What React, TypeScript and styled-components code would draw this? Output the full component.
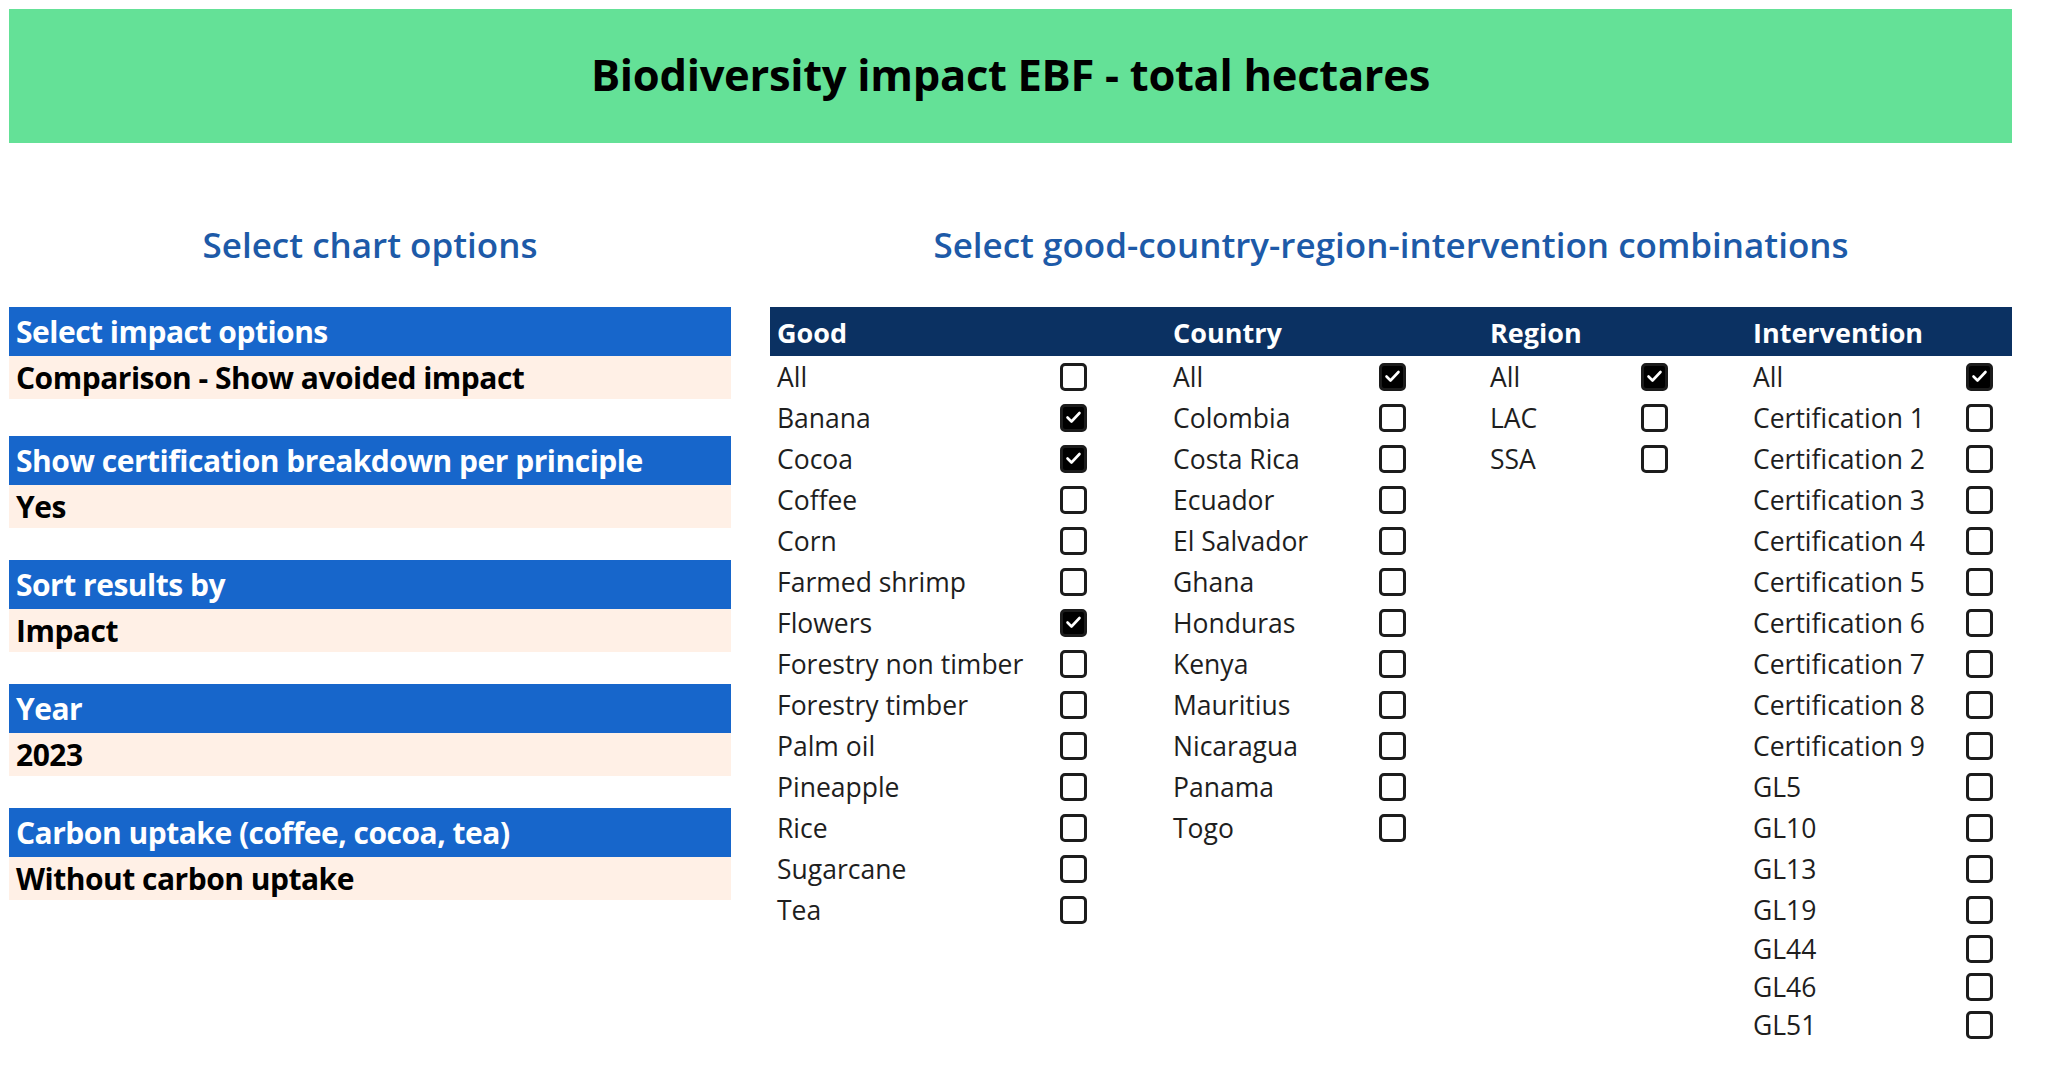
import styled, { createGlobalStyle } from 'styled-components'

const GlobalStyle = createGlobalStyle`
    body {
        margin: 0;
        background: #ffffff;
        font-family: "Open Sans", "Noto Sans", sans-serif;
    }
`

const colors = {
    green: '#64e197',
    blue: '#1766cb',
    navy: '#0b3162',
    peach: '#fff0e6',
    heading: '#1d5aa8',
    text: '#1e1e1e',
}

const Page = styled.div`
    width: 2021px;
    padding: 9px;
    box-sizing: border-box;
`

const Banner = styled.div`
    height: 134px;
    background-color: ${colors.green};
    display: flex;
    align-items: center;
    justify-content: center;
    padding-bottom: 4px;
    box-sizing: border-box;
    font-size: 43.5px;
    font-weight: 700;
    color: #000;
    letter-spacing: -0.3px;
`

const Content = styled.div`
    display: grid;
    grid-template-columns: 722px 1242px;
    column-gap: 39px;
`

const SectionTitle = styled.h2`
    margin: 80px 0 40px;
    height: 44px;
    line-height: 44px;
    text-align: center;
    font-size: 35px;
    font-weight: 600;
    color: ${colors.heading};
`

const OptionBlock = styled.div`
    margin-bottom: 32px;
    &:first-of-type {
        margin-bottom: 37px;
    }
`

const OptionLabel = styled.div`
    height: 49px;
    line-height: 49px;
    padding-left: 7px;
    background-color: ${colors.blue};
    color: #fff;
    font-size: 30px;
    font-weight: 700;
    letter-spacing: -0.5px;
`

const OptionValue = styled.div`
    height: 43px;
    line-height: 43px;
    padding-left: 7px;
    background-color: ${colors.peach};
    color: #000;
    font-size: 30px;
    font-weight: 700;
    letter-spacing: -0.5px;
`

const TableGrid = styled.div`
    display: grid;
    grid-template-columns: 396px 317px 263px 266px;
`

const HeaderBar = styled(TableGrid)`
    height: 49px;
    background-color: ${colors.navy};
`

const HeaderCell = styled.div`
    padding-left: 7px;
    line-height: 52px;
    color: #fff;
    font-size: 27px;
    font-weight: 700;
`

const GroupList = styled.div`
    display: flex;
    flex-direction: column;
`

const Row = styled.div<{ $labelWidth: number; $compact?: boolean }>`
    display: grid;
    grid-template-columns: ${p => p.$labelWidth}px 28px;
    align-items: center;
    height: ${p => (p.$compact ? 38 : 41)}px;
    padding-left: 7px;
`

const RowLabel = styled.span`
    font-size: 26.5px;
    color: ${colors.text};
    white-space: nowrap;
`

const Box = styled.span<{ $checked: boolean }>`
    width: 27px;
    height: 28px;
    box-sizing: border-box;
    border: 3px solid #1c1c1c;
    border-radius: 5px;
    background-color: ${p => (p.$checked ? '#000' : '#fff')};
    display: flex;
    align-items: center;
    justify-content: center;
`

const Checkbox = ({ checked }: { checked: boolean }) => (
    <Box $checked={checked}>
        {checked && (
            <svg width="19" height="19" viewBox="0 0 19 19">
                <polyline points="3.5,9.5 7.5,13.5 15.5,5" fill="none" stroke="#fff" strokeWidth="2.6" strokeLinecap="round" strokeLinejoin="round" />
            </svg>
        )}
    </Box>
)

type Item = { name: string; checked?: boolean }

const options = [
    { label: 'Select impact options', value: 'Comparison - Show avoided impact' },
    { label: 'Show certification breakdown per principle', value: 'Yes' },
    { label: 'Sort results by', value: 'Impact' },
    { label: 'Year', value: '2023' },
    { label: 'Carbon uptake (coffee, cocoa, tea)', value: 'Without carbon uptake' },
]

const groups: { title: string; labelWidth: number; items: Item[] }[] = [
    {
        title: 'Good',
        labelWidth: 283,
        items: [
            { name: 'All' },
            { name: 'Banana', checked: true },
            { name: 'Cocoa', checked: true },
            { name: 'Coffee' },
            { name: 'Corn' },
            { name: 'Farmed shrimp' },
            { name: 'Flowers', checked: true },
            { name: 'Forestry non timber' },
            { name: 'Forestry timber' },
            { name: 'Palm oil' },
            { name: 'Pineapple' },
            { name: 'Rice' },
            { name: 'Sugarcane' },
            { name: 'Tea' },
        ],
    },
    {
        title: 'Country',
        labelWidth: 206,
        items: [
            { name: 'All', checked: true },
            { name: 'Colombia' },
            { name: 'Costa Rica' },
            { name: 'Ecuador' },
            { name: 'El Salvador' },
            { name: 'Ghana' },
            { name: 'Honduras' },
            { name: 'Kenya' },
            { name: 'Mauritius' },
            { name: 'Nicaragua' },
            { name: 'Panama' },
            { name: 'Togo' },
        ],
    },
    {
        title: 'Region',
        labelWidth: 151,
        items: [{ name: 'All', checked: true }, { name: 'LAC' }, { name: 'SSA' }],
    },
    {
        title: 'Intervention',
        labelWidth: 213,
        items: [
            { name: 'All', checked: true },
            ...Array.from({ length: 9 }, (_, i) => ({ name: `Certification ${i + 1}` })),
            { name: 'GL5' },
            { name: 'GL10' },
            { name: 'GL13' },
            { name: 'GL19' },
            { name: 'GL44' },
            { name: 'GL46' },
            { name: 'GL51' },
        ],
    },
]

const App = () => {
    return (
        <Page>
            <GlobalStyle />
            <Banner>Biodiversity impact EBF - total hectares</Banner>
            <Content>
                <div>
                    <SectionTitle>Select chart options</SectionTitle>
                    {options.map(o => (
                        <OptionBlock key={o.label}>
                            <OptionLabel>{o.label}</OptionLabel>
                            <OptionValue>{o.value}</OptionValue>
                        </OptionBlock>
                    ))}
                </div>
                <div>
                    <SectionTitle>Select good-country-region-intervention combinations</SectionTitle>
                    <HeaderBar>
                        {groups.map(g => (
                            <HeaderCell key={g.title}>{g.title}</HeaderCell>
                        ))}
                    </HeaderBar>
                    <TableGrid>
                        {groups.map(g => (
                            <GroupList key={g.title}>
                                {g.items.map((item, i) => (
                                    <Row key={item.name} $labelWidth={g.labelWidth} $compact={i >= 14}>
                                        <RowLabel>{item.name}</RowLabel>
                                        <Checkbox checked={!!item.checked} />
                                    </Row>
                                ))}
                            </GroupList>
                        ))}
                    </TableGrid>
                </div>
            </Content>
        </Page>
    )
}

export default App
